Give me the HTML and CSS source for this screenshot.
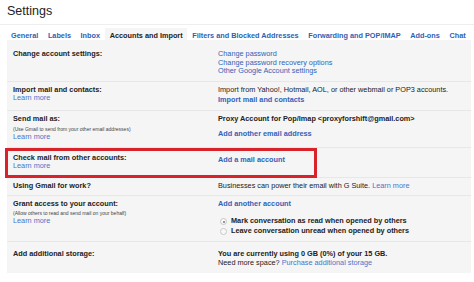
FILE: index.html
```html
<!DOCTYPE html>
<html>
<head>
<title>Settings</title>
<link rel="stylesheet" href="styles.css">
</head>
<body>
<div class="page-title">Settings</div>

<div class="tabs">
  <a class="tab">General</a>
  <a class="tab">Labels</a>
  <a class="tab">Inbox</a>
  <a class="tab active">Accounts and Import</a>
  <a class="tab">Filters and Blocked Addresses</a>
  <a class="tab">Forwarding and POP/IMAP</a>
  <a class="tab">Add-ons</a>
  <a class="tab">Chat</a>
</div>

<div class="panel">
  <div class="row row-account">
    <div class="label"><b>Change account settings:</b></div>
    <div class="value">
      <a class="link">Change password</a>
      <a class="link">Change password recovery options</a>
      <a class="link">Other Google Account settings</a>
    </div>
  </div>

  <div class="row">
    <div class="label">
      <b>Import mail and contacts:</b>
      <a class="learn">Learn more</a>
    </div>
    <div class="value">
      <div>Import from Yahoo!, Hotmail, AOL, or other webmail or POP3 accounts.</div>
      <a class="link strong import">Import mail and contacts</a>
    </div>
  </div>

  <div class="row">
    <div class="label">
      <b>Send mail as:</b>
      <div class="hint">(Use Gmail to send from your other email addresses)</div>
      <a class="learn">Learn more</a>
    </div>
    <div class="value">
      <b>Proxy Account for Pop/Imap &lt;proxyforshift@gmail.com&gt;</b>
      <a class="link strong add-email">Add another email address</a>
    </div>
  </div>

  <div class="row row-check">
    <div class="label">
      <b>Check mail from other accounts:</b>
      <a class="learn">Learn more</a>
    </div>
    <div class="value">
      <a class="link strong add-mail">Add a mail account</a>
    </div>
    <div class="highlight"></div>
  </div>

  <div class="row">
    <div class="label"><b>Using Gmail for work?</b></div>
    <div class="value">Businesses can power their email with G Suite. <a class="learn inline">Learn more</a></div>
  </div>

  <div class="row row-grant">
    <div class="label">
      <b>Grant access to your account:</b>
      <div class="hint">(Allow others to read and send mail on your behalf)</div>
      <a class="learn">Learn more</a>
    </div>
    <div class="value">
      <a class="link strong">Add another account</a>
      <div class="radios">
        <div class="radio-row"><span class="radio checked"></span><b>Mark conversation as read when opened by others</b></div>
        <div class="radio-row"><span class="radio"></span><b>Leave conversation unread when opened by others</b></div>
      </div>
    </div>
  </div>

  <div class="row row-storage">
    <div class="label"><b>Add additional storage:</b></div>
    <div class="value">
      <b>You are currently using 0 GB (0%) of your 15 GB.</b>
      <div>Need more space? <a class="learn inline">Purchase additional storage</a></div>
    </div>
  </div>
</div>
</body>
</html>
```

FILE: styles.css
```css
body {
  margin: 0;
  font-family: "Liberation Sans", Arial, sans-serif;
  color: #222;
  background-color: #fff;
}

.page-title {
  font-size: 12.5px;
  line-height: 22px;
  height: 24px;
  padding-left: 7px;
  border-bottom: 1px solid #eeeeee;
}

.tabs {
  display: flex;
  padding: 3px 0 0 6.3px;
  white-space: nowrap;
}

.tab {
  font-size: 7.3px;
  font-weight: bold;
  line-height: 9px;
  padding: 3px 4.8px 0;
  color: #2f5fb3;
}

.tab.active {
  color: #222;
  background-color: #f5f5f5;
}

.panel {
  background-color: #f5f5f5;
  margin: 0 3px 0 7px;
  padding-top: 6px;
  font-size: 7.3px;
  line-height: 8.5px;
}

.row {
  display: flex;
  padding: 4px 0 5px;
  border-bottom: 1px solid #e7e7e7;
  position: relative;
}

.row:last-child {
  border-bottom: none;
}

.label {
  width: 205px;
  padding-left: 6px;
  flex-shrink: 0;
}

.label b, .label a, .value a, .value b, .value div {
  display: block;
}

.value {
  flex: 1;
  white-space: nowrap;
}

.link {
  color: #3362b8;
}

.strong {
  font-weight: bold;
}

.learn {
  color: #4a74c9;
}

.value a.inline {
  display: inline;
}

.hint {
  font-size: 5px;
  line-height: 7px;
  margin-top: 3px;
  color: #444;
}

.import {
  margin-top: 2px;
}

.add-email {
  margin-top: 6.5px;
}

.row-check {
  padding: 6px 0 6px;
}

.add-mail {
  margin-top: 2.5px;
}

.highlight {
  position: absolute;
  left: -2px;
  top: 0;
  width: 306px;
  height: 24px;
  border: 3px solid #d8232a;
}

.row-grant .hint {
  margin-top: 1px;
}

.row-grant {
  padding-bottom: 4px;
}

.radios {
  margin-top: 8px;
}

.value .radio-row {
  display: flex;
  align-items: center;
  height: 10px;
}

.radio-row b {
  display: inline;
}

.radio {
  width: 5px;
  height: 5px;
  border: 1px solid #c8c8c8;
  border-radius: 50%;
  background-color: #f8f8f8;
  margin: 0 4px 0 2px;
  position: relative;
}

.radio.checked::after {
  content: "";
  position: absolute;
  left: 1.5px;
  top: 1.5px;
  width: 2px;
  height: 2px;
  border-radius: 50%;
  background-color: #777;
}

.row-storage {
  padding: 7.5px 0 5.5px;
  line-height: 9px;
}
```
